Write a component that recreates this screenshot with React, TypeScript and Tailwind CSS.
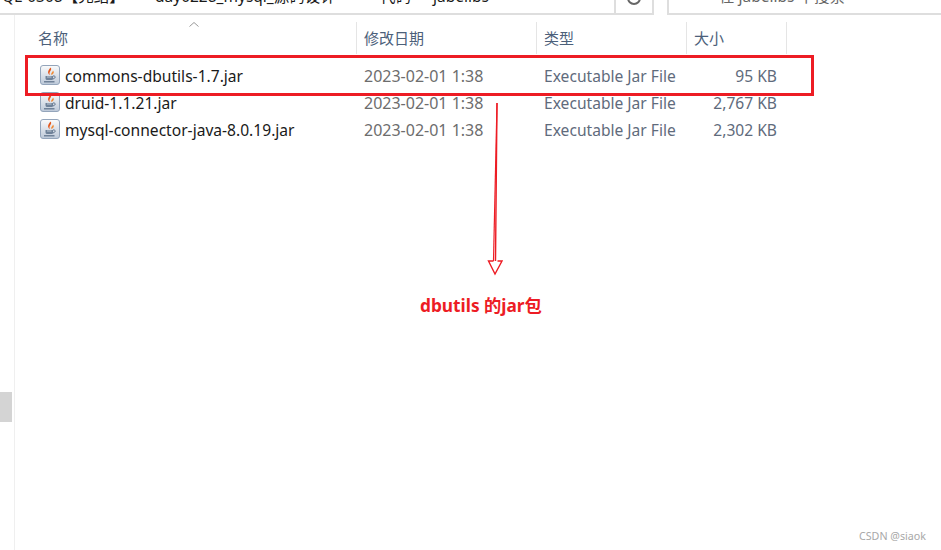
const FONT = "font-['Noto_Sans','Noto_Sans_CJK_SC',sans-serif]";

const FILES = [
  { name: "commons-dbutils-1.7.jar", size: "95 KB" },
  { name: "druid-1.1.21.jar", size: "2,767 KB" },
  { name: "mysql-connector-java-8.0.19.jar", size: "2,302 KB" },
];

function JarIcon() {
  return (
    <svg width="20" height="20" viewBox="0 0 20 20" className="shrink-0">
      <defs>
        <linearGradient id="jarbg" x1="0" y1="0" x2="0" y2="1">
          <stop offset="0" stopColor="#fbfbfb" />
          <stop offset="1" stopColor="#bcc8d8" />
        </linearGradient>
      </defs>
      <rect x="0.5" y="0.5" width="19" height="19" rx="2.5" fill="url(#jarbg)" stroke="#94a5bb" />
      <path d="M10.5 2.5 C13 5 8 6.5 10 10 C6.5 8 8.5 5 10.5 2.5 Z" fill="#e4571b" />
      <path d="M13 5.5 C12.5 7.5 10.5 8 11.5 10 C14 8.5 14.5 7 13 5.5 Z" fill="#f08a35" />
      <path d="M5.5 11 H13 V13.5 C13 14.5 12 15 11 15 H7.5 C6.5 15 5.5 14.5 5.5 13.5 Z" fill="#6f8299" />
      <path d="M7 12 H11.5" stroke="#d5dde6" strokeWidth="0.8" />
      <path d="M13 11 C16 10.5 16 13.5 12.5 14" stroke="#5b6f88" strokeWidth="1" fill="none" />
      <path d="M4 16.8 H14.5" stroke="#5b6f88" strokeWidth="1.2" />
    </svg>
  );
}

export default function App() {
  return (
    <div className={`relative h-[550px] w-[941px] overflow-hidden bg-white ${FONT}`}>
      {/* cut off address bar */}
      <div className="flex h-[15px] items-end text-[15.5px] leading-[20px]">
        <div className="h-[15px] w-[614px] overflow-hidden border-b-2 border-[#dedede] pl-[2px] text-[#1a1a1a]">
          <div className="-mt-[14px] flex whitespace-pre">
            <span className="w-[153px]">QL-0308【完结】</span>
            <span className="w-[225px]">day0228_mysql_源码设计</span>
            <span className="w-[53px]">代码</span>
            <span>jabelibs</span>
          </div>
        </div>
        <div className="flex h-[15px] w-[40px] justify-center overflow-hidden border-x-2 border-b-2 border-[#dedede]">
          <div className="-mt-[9px] h-[14px] w-[14px] rounded-full border-2 border-[#666666]" />
        </div>
        <div className="ml-[13px] flex h-[15px] flex-1 overflow-hidden border-b-2 border-l-2 border-[#dedede] text-[#666666]">
          <span className="-mt-[14px] ml-[50px] whitespace-nowrap">在 jabelibs 中搜索</span>
        </div>
      </div>

      <div className="flex h-[535px]">
        {/* nav pane strip */}
        <div className="h-full w-[15px] border-r border-[#efefef] pt-[377px]">
          <div className="h-[30px] w-[12px] bg-[#d4d4d4]" />
        </div>

        <div className="flex-1">
          {/* column headers */}
          <div className="relative ml-[9px] mt-[7px] flex h-[32px] items-center text-[15px] text-[#4c607a]">
            <svg className="absolute left-[163px] -top-[1px]" width="14" height="7" viewBox="0 0 14 7">
              <path d="M2.5 5.5 L7 1.5 L11.5 5.5" fill="none" stroke="#9a9a9a" strokeWidth="1" />
            </svg>
            <div className="flex h-full w-[333px] items-center border-r border-[#e5e5e5] pl-[14px]">名称</div>
            <div className="flex h-full w-[180px] items-center border-r border-[#e5e5e5] pl-[7px]">修改日期</div>
            <div className="flex h-full w-[150px] items-center border-r border-[#e5e5e5] pl-[7px]">类型</div>
            <div className="flex h-full w-[100px] items-center border-r border-[#e5e5e5] pl-[7px]">大小</div>
          </div>

          {/* file rows */}
          <div className="ml-[25px] mt-[8px] flex flex-col">
            {FILES.map((f) => (
              <div key={f.name} className="flex h-[27px] items-center text-[15.6px]">
                <div className="flex w-[324px] items-center gap-[5px]">
                  <JarIcon />
                  <span className="mt-[2px] whitespace-nowrap text-[#1a1a1a]">{f.name}</span>
                </div>
                <span className="mt-[1px] w-[180px] whitespace-nowrap text-[16px] text-[#6d6d6d]">2023-02-01 1:38</span>
                <span className="mt-[2px] w-[143px] whitespace-nowrap text-[#5f6b7c]">Executable Jar File</span>
                <span className="mt-[2px] w-[90px] whitespace-nowrap text-right text-[#5f6b7c]">{f.size}</span>
              </div>
            ))}
          </div>
        </div>
      </div>

      {/* red annotations */}
      <div className="absolute left-[25px] top-[55px] h-[41px] w-[789px] border-[3px] border-[#ed1c24]" />
      <svg className="absolute left-[480px] top-[100px]" width="30" height="180" viewBox="0 0 30 180">
        <path d="M17 3 L15.5 161 M13.5 161 L8.5 161 L15 174 L22 161 L17.5 161" fill="none" stroke="#ed1c24" strokeWidth="1.4" />
        <path d="M17 3 L13.5 161" fill="none" stroke="#ed1c24" strokeWidth="1.2" />
      </svg>
      <div className="absolute left-[420px] top-[294px] whitespace-nowrap text-[17.3px] leading-[24px] font-bold text-[#ed1c24]">
        dbutils 的jar包
      </div>

      <div className="absolute left-[859px] top-[528px] whitespace-nowrap text-[10.7px] leading-[16px] text-[#a8a8a8]">
        CSDN @siaok
      </div>
    </div>
  );
}
